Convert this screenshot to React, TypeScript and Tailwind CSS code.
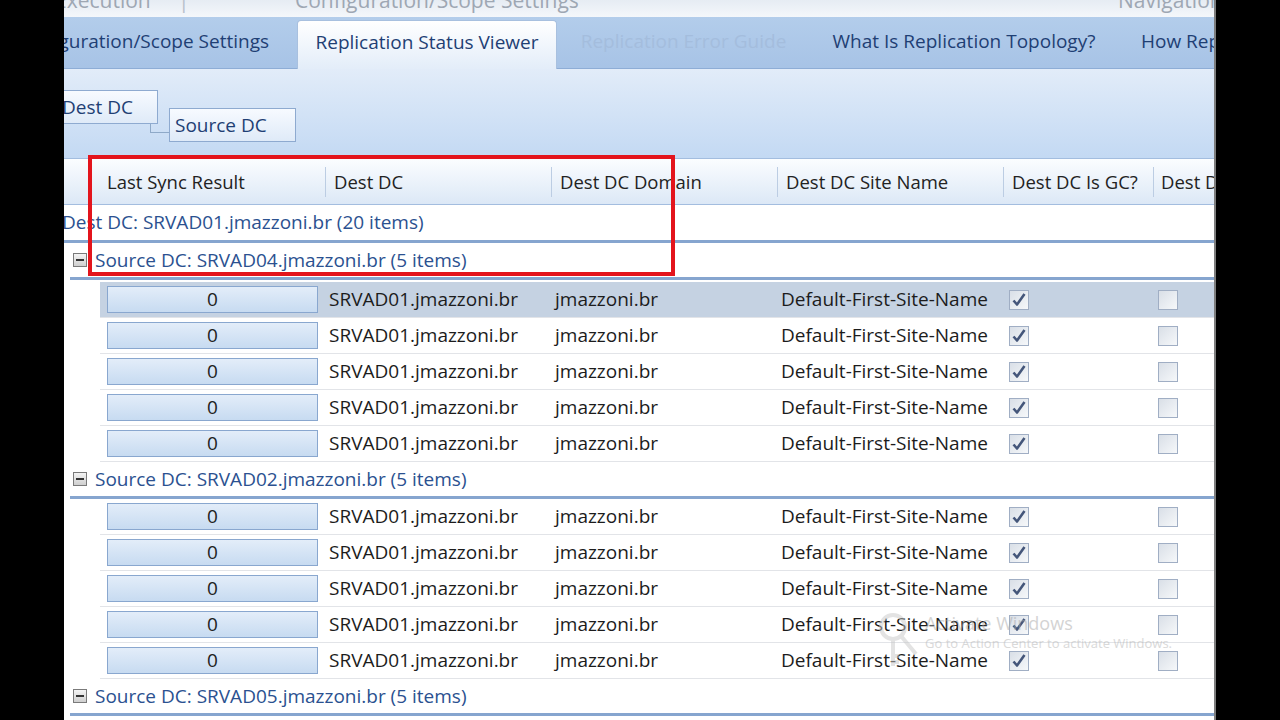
import React from "react";

const font = { fontFamily: '"Open Sans", "Noto Sans", sans-serif' };

function Expander() {
  return (
    <div className="w-[14px] h-[14px] border border-[#7a7a7a] bg-gradient-to-b from-[#f4f4f4] to-[#cfcfcf] flex items-center justify-center">
      <div className="w-[8px] h-[2px] bg-[#333]" />
    </div>
  );
}

function CheckBox({ checked }: { checked: boolean }) {
  return (
    <div className="w-[20px] h-[20px] border border-[#a0aec4] bg-gradient-to-br from-[#d9dfe7] to-[#f6f8fa] flex items-center justify-center">
      {checked && (
        <svg width="16" height="16" viewBox="0 0 16 16">
          <path d="M2.5 8.5 L6 12.5 L13.5 2" fill="none" stroke="#44567a" strokeWidth="2.6" strokeLinejoin="round" />
        </svg>
      )}
    </div>
  );
}

function DataRow({ selected }: { selected?: boolean }) {
  return (
    <div className="flex h-[36px]">
      <div className="w-[36px] shrink-0" />
      <div className={`flex flex-1 items-center border-b border-[#e2e4e8] ${selected ? "bg-[#c5d2e2]" : "bg-white"}`}>
        <div className="w-[225px] shrink-0 pl-[7px]">
          <div className="w-[211px] h-[27px] border border-[#89a7cf] bg-gradient-to-b from-[#e3edf9] to-[#c7dbf1] flex items-center justify-center text-[19px] text-[#222]">
            0
          </div>
        </div>
        <div className="w-[226px] shrink-0 pl-[4px] text-[19px] text-[#1c1c1c] whitespace-nowrap">SRVAD01.jmazzoni.br</div>
        <div className="w-[226px] shrink-0 pl-[4px] text-[19px] text-[#1c1c1c] whitespace-nowrap">jmazzoni.br</div>
        <div className="w-[226px] shrink-0 pl-[4px] text-[19px] text-[#1c1c1c] whitespace-nowrap">Default-First-Site-Name</div>
        <div className="w-[150px] shrink-0 pl-[6px]">
          <CheckBox checked />
        </div>
        <div className="pl-[5px]">
          <CheckBox checked={false} />
        </div>
      </div>
    </div>
  );
}

function GroupHeader({ label }: { label: string }) {
  return (
    <div className="flex h-[37px] pl-[6px]">
      <div className="flex-1 flex items-center border-b-[3px] border-[#86a5cf] bg-white">
        <div className="pl-[3px] pr-[8px]">
          <Expander />
        </div>
        <span className="text-[19px] text-[#2b5190] whitespace-nowrap">{label}</span>
      </div>
    </div>
  );
}

export default function App() {
  const groups = [
    "Source DC: SRVAD04.jmazzoni.br (5 items)",
    "Source DC: SRVAD02.jmazzoni.br (5 items)",
    "Source DC: SRVAD05.jmazzoni.br (5 items)",
  ];
  return (
    <div className="w-[1280px] h-[720px] bg-black flex overflow-hidden" style={font}>
      <div className="w-[64px] shrink-0 bg-black" />
      <div className="w-[1152px] shrink-0 relative flex flex-col overflow-hidden bg-white border-r-2 border-[#7d7d7d]">
        {/* top clipped strip */}
        <div className="h-[17px] shrink-0 overflow-hidden bg-gradient-to-b from-[#e6ecf3] to-[#f4f7fb]">
          <div className="-mt-[14px] flex text-[21px] leading-[28px] text-[#9ea7b3] whitespace-nowrap">
            <span className="-ml-[9px] w-[123px] shrink-0">Execution</span>
            <span className="w-[117px] shrink-0 text-[#b8c0ca]">|</span>
            <span className="w-[823px] shrink-0">Configuration/Scope Settings</span>
            <span>Navigation</span>
          </div>
        </div>
        {/* tab bar */}
        <div className="h-[52px] shrink-0 flex items-end bg-gradient-to-b from-[#b3cdeb] to-[#a7c3e6] border-b border-[#8eadd6] text-[19px] text-[#1f3f74] whitespace-nowrap">
          <div className="w-[233px] shrink-0 h-[48px] pb-[5px] flex items-center justify-end pr-[28px] overflow-hidden">
            <span>Configuration/Scope Settings</span>
          </div>
          <div className="w-[260px] shrink-0 h-[49px] pb-[5px] -mb-px flex items-center justify-center rounded-t-[4px] border border-b-0 border-[#a8c0df] bg-gradient-to-b from-[#ffffff] to-[#e3edf9]">
            Replication Status Viewer
          </div>
          <div className="w-[253px] shrink-0 h-[48px] pb-[5px] flex items-center justify-center text-[#a4bddd]">
            Replication Error Guide
          </div>
          <div className="w-[308px] shrink-0 h-[48px] pb-[5px] flex items-center justify-center">
            What Is Replication Topology?
          </div>
          <div className="flex-1 h-[48px] pb-[5px] flex items-center pl-[23px] overflow-hidden">
            How Replication Works
          </div>
        </div>
        {/* group panel */}
        <div className="h-[89px] shrink-0 flex items-start bg-gradient-to-b from-[#e2ecf9] to-[#c3d9f3] overflow-hidden text-[19px] text-[#1f3f74] whitespace-nowrap">
          <div className="mt-[21px] -ml-[24px] w-[118px] h-[34px] shrink-0 border border-[#8eaad0] bg-gradient-to-b from-[#f7faff] to-[#dfeaf8] flex items-center pl-[21px]">
            Dest DC
          </div>
          <div className="mt-[55px] -ml-[8px] w-[19px] h-[9px] shrink-0 border-l border-b border-[#8ea9c8]" />
          <div className="mt-[39px] w-[127px] h-[34px] shrink-0 border border-[#8eaad0] bg-gradient-to-b from-[#f7faff] to-[#dfeaf8] flex items-center pl-[5px]">
            Source DC
          </div>
        </div>
        {/* column header */}
        <div className="h-[47px] shrink-0 flex items-center border-t border-b border-[#a3bddf] bg-gradient-to-b from-[#fbfdff] to-[#dce8f6] text-[18.5px] text-[#222] whitespace-nowrap">
          <div className="w-[33px] shrink-0" />
          <div className="w-[228px] shrink-0 pl-[10px] h-[30px] flex items-center">Last Sync Result</div>
          <div className="w-[226px] shrink-0 pl-[8px] h-[30px] flex items-center border-l border-[#bccde3]">Dest DC</div>
          <div className="w-[226px] shrink-0 pl-[8px] h-[30px] flex items-center border-l border-[#bccde3]">Dest DC Domain</div>
          <div className="w-[226px] shrink-0 pl-[8px] h-[30px] flex items-center border-l border-[#bccde3]">Dest DC Site Name</div>
          <div className="w-[150px] shrink-0 pl-[8px] h-[30px] flex items-center border-l border-[#bccde3]">Dest DC Is GC?</div>
          <div className="flex-1 pl-[7px] h-[30px] flex items-center border-l border-[#bccde3] overflow-hidden">Dest DC Is RODC?</div>
        </div>
        {/* group 1 */}
        <div className="h-[38px] shrink-0 flex items-center border-b-[3px] border-[#86a5cf] bg-white">
          <span className="-ml-[2px] text-[19px] text-[#2b5190] whitespace-nowrap">Dest DC: SRVAD01.jmazzoni.br (20 items)</span>
        </div>
        {groups.map((g, gi) => (
          <div key={g} className="flex flex-col shrink-0">
            <GroupHeader label={g} />
            {gi < 2 && (
              <div className={`flex flex-col ${gi === 0 ? "mt-[2px]" : ""}`}>
                {[0, 1, 2, 3, 4].map((r) => (
                  <DataRow key={r} selected={gi === 0 && r === 0} />
                ))}
              </div>
            )}
          </div>
        ))}
        <div className="flex-1 bg-white" />

        {/* red highlight box overlay */}
        <div className="absolute left-[24px] top-[155px] w-[587px] h-[121px] border-[4px] border-[#e3141c] pointer-events-none" />

        {/* activate windows watermark overlay */}
        <div className="absolute left-[812px] top-[610px] flex items-start pointer-events-none opacity-50">
          <svg width="44" height="58" viewBox="0 0 44 58" className="mr-[4px]">
            <circle cx="17" cy="17" r="12" fill="none" stroke="#c8c8c8" strokeWidth="4" />
            <path d="M25 26 L40 44 M17 29 L17 56 M17 46 L23 46 M17 52 L23 52" stroke="#c8c8c8" strokeWidth="4" fill="none" />
          </svg>
          <div className="flex flex-col -ml-[4px] pt-[2px]">
            <span className="text-[18px] leading-[22px] text-[#a9a9a9] pl-[5px]">Activate Windows</span>
            <span className="text-[13px] leading-[18px] text-[#b4b4b4] pl-[5px]">Go to Action Center to activate Windows.</span>
          </div>
        </div>
      </div>
      <div className="flex-1 bg-black" />
    </div>
  );
}
